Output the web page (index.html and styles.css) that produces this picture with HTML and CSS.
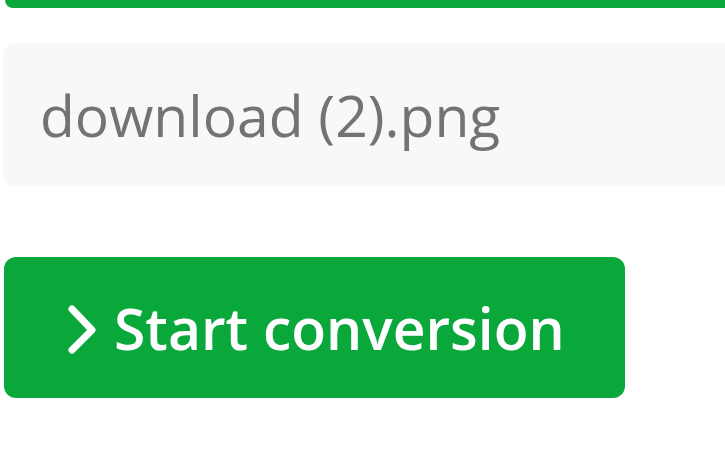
FILE: index.html
```html
<!DOCTYPE html>
<html>
<head>
<meta charset="utf-8">
<link rel="stylesheet" href="styles.css">
</head>
<body>
<div class="page">
  <div class="topbar"></div>
  <div class="file-field"><span class="file-name">download (2).png</span></div>
  <button class="start-btn">
    <svg class="chev" viewBox="0 0 32 52" width="32" height="52"><path d="M6 6 L26 27 L6 47" fill="none" stroke="#fff" stroke-width="7" stroke-linecap="round" stroke-linejoin="round"/></svg>
    <span>Start conversion</span>
  </button>
</div>
</body>
</html>
```
FILE: styles.css
```css
html, body {
  margin: 0;
  padding: 0;
  background: #fff;
  overflow: hidden;
}
.page {
  width: 725px;
  height: 453px;
  overflow: hidden;
  display: flex;
  flex-direction: column;
  align-items: flex-start;
}
.topbar {
  margin-left: 5px;
  width: 760px;
  height: 8px;
  background: #0aa83b;
  border-bottom-left-radius: 12px;
}
.file-field {
  margin-top: 35px;
  margin-left: 3px;
  width: 760px;
  height: 143px;
  background: #f8f8f8;
  border-radius: 12px;
  display: flex;
  align-items: center;
  padding-left: 37px;
  box-sizing: border-box;
  flex-shrink: 0;
}
.file-name {
  font-family: "Open Sans", sans-serif;
  font-size: 57px;
  color: #737373;
  line-height: 1;
  margin-top: 2px;
}
.start-btn {
  margin-top: 71px;
  margin-left: 4px;
  width: 621px;
  height: 141px;
  background: #0aa83b;
  border: none;
  border-radius: 12px;
  display: flex;
  align-items: center;
  padding: 0 0 0 62px;
  gap: 16px;
  color: #fff;
  font-family: "Open Sans", sans-serif;
  font-weight: 600;
  font-size: 57px;
  box-sizing: border-box;
  flex-shrink: 0;
}
.chev {
  flex-shrink: 0;
  margin-top: 2px;
}
```
